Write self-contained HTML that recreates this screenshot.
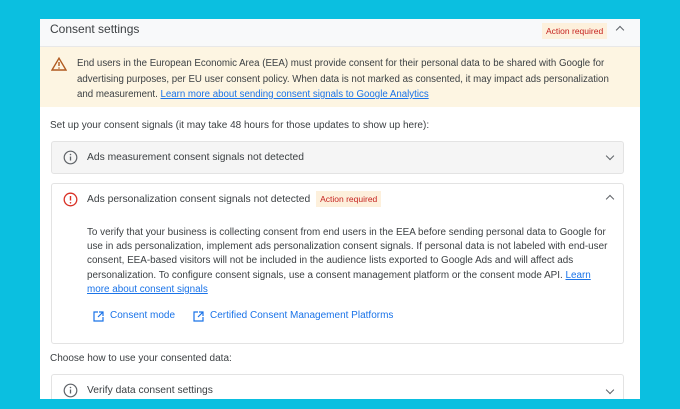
<!DOCTYPE html>
<html><head><style>
*{box-sizing:border-box;margin:0;padding:0}
body{width:680px;height:409px;background:#0bbfe0;font-family:"Liberation Sans",sans-serif;overflow:hidden;position:relative;color:#3c4043}
.panel{position:absolute;left:40px;top:19px;width:600px;height:380px;background:#fff;overflow:hidden}
.hdr{height:28px;background:#f8f9fa;border-bottom:1px solid #e8e8e8;position:relative}
.hdr .t{position:absolute;left:10px;top:3px;font-size:12px;color:#3c4043}
.badge{background:#fdf0dc;color:#c5221f;font-size:8.5px;padding:3px 4px}
.warn{height:60px;background:#fdf5e2;position:relative;font-size:9.7px;line-height:15.5px;color:#3c4043}
.warn .txt{position:absolute;left:37px;top:9px;width:533px}
a{color:#1a73e8;text-decoration:underline}
.p{position:absolute;font-size:10px;color:#3c4043}
.box{position:absolute;left:11px;width:573px;border:1px solid #e3e3e3;border-radius:3px}
.row{position:absolute;left:35px;font-size:10.3px;color:#3c4043}
.chev{position:absolute;right:10px;width:6px;height:6px;border-right:1.3px solid #5f6368;border-bottom:1.3px solid #5f6368}
.lk{position:absolute;font-size:10px;color:#1a73e8}
</style></head><body>
<div class="panel">
 <div class="hdr"><div class="t">Consent settings</div>
  <span class="badge" style="position:absolute;left:502px;top:4px">Action required</span>
  <div class="chev" style="top:8px;right:17px;transform:rotate(-135deg)"></div></div>
 <div class="warn">
  <svg style="position:absolute;left:11px;top:10px" width="16" height="14" viewBox="0 0 16 14"><path d="M8 1.2L15 13H1z" fill="none" stroke="#b05a1f" stroke-width="1.4"/><path d="M8 5v4" stroke="#b05a1f" stroke-width="1.4"/><circle cx="8" cy="11" r=".8" fill="#b05a1f"/></svg>
  <div class="txt">End users in the European Economic Area (EEA) must provide consent for their personal data to be shared with Google for advertising purposes, per EU user consent policy. When data is not marked as consented, it may impact ads personalization and measurement. <a>Learn more about sending consent signals to Google Analytics</a></div>
 </div>
 <div class="p" style="left:10px;top:101px">Set up your consent signals (it may take 48 hours for those updates to show up here):</div>
 <div class="box" style="top:122px;height:33px;background:#f5f5f5">
  <svg style="position:absolute;left:11px;top:8px" width="15" height="15" viewBox="0 0 15 15"><circle cx="7.5" cy="7.5" r="6.3" fill="none" stroke="#5f6368" stroke-width="1.2"/><path d="M7.5 6.5v4" stroke="#5f6368" stroke-width="1.3"/><circle cx="7.5" cy="4.5" r=".8" fill="#5f6368"/></svg>
  <div class="row" style="top:10px">Ads measurement consent signals not detected</div>
  <div class="chev" style="top:11px;transform:rotate(45deg)"></div>
 </div>
 <div class="box" style="top:164px;height:161px">
  <svg style="position:absolute;left:11px;top:8px" width="15" height="15" viewBox="0 0 15 15"><circle cx="7.5" cy="7.5" r="6.3" fill="none" stroke="#d93025" stroke-width="1.3"/><path d="M7.5 4v4.5" stroke="#d93025" stroke-width="1.4"/><circle cx="7.5" cy="10.8" r=".8" fill="#d93025"/></svg>
  <div class="row" style="top:10px">Ads personalization consent signals not detected <span class="badge" style="margin-left:3px">Action required</span></div>
  <div class="chev" style="top:12px;transform:rotate(-135deg)"></div>
  <div style="position:absolute;left:35px;top:42px;width:527px;font-size:9.9px;line-height:14.2px;color:#3c4043">To verify that your business is collecting consent from end users in the EEA before sending personal data to Google for use in ads personalization, implement ads personalization consent signals. If personal data is not labeled with end-user consent, EEA-based visitors will not be included in the audience lists exported to Google Ads and will affect ads personalization. To configure consent signals, use a consent management platform or the consent mode API. <a>Learn more about consent signals</a></div>
  <svg style="position:absolute;left:41px;top:127px" width="11" height="11" viewBox="0 0 11 11"><path d="M5 1H1v9h9V6M6 1h4v4M10 1L5 6" fill="none" stroke="#1a73e8" stroke-width="1.2"/></svg>
  <div class="lk" style="left:58px;top:126px">Consent mode</div>
  <svg style="position:absolute;left:141px;top:127px" width="11" height="11" viewBox="0 0 11 11"><path d="M5 1H1v9h9V6M6 1h4v4M10 1L5 6" fill="none" stroke="#1a73e8" stroke-width="1.2"/></svg>
  <div class="lk" style="left:158px;top:126px">Certified Consent Management Platforms</div>
 </div>
 <div class="p" style="left:10px;top:334px">Choose how to use your consented data:</div>
 <div class="box" style="top:355px;height:40px">
  <svg style="position:absolute;left:11px;top:8px" width="15" height="15" viewBox="0 0 15 15"><circle cx="7.5" cy="7.5" r="6.3" fill="none" stroke="#5f6368" stroke-width="1.2"/><path d="M7.5 6.5v4" stroke="#5f6368" stroke-width="1.3"/><circle cx="7.5" cy="4.5" r=".8" fill="#5f6368"/></svg>
  <div class="row" style="top:10px">Verify data consent settings</div>
  <div class="chev" style="top:12px;transform:rotate(45deg)"></div>
 </div>
</div>
</body></html>
